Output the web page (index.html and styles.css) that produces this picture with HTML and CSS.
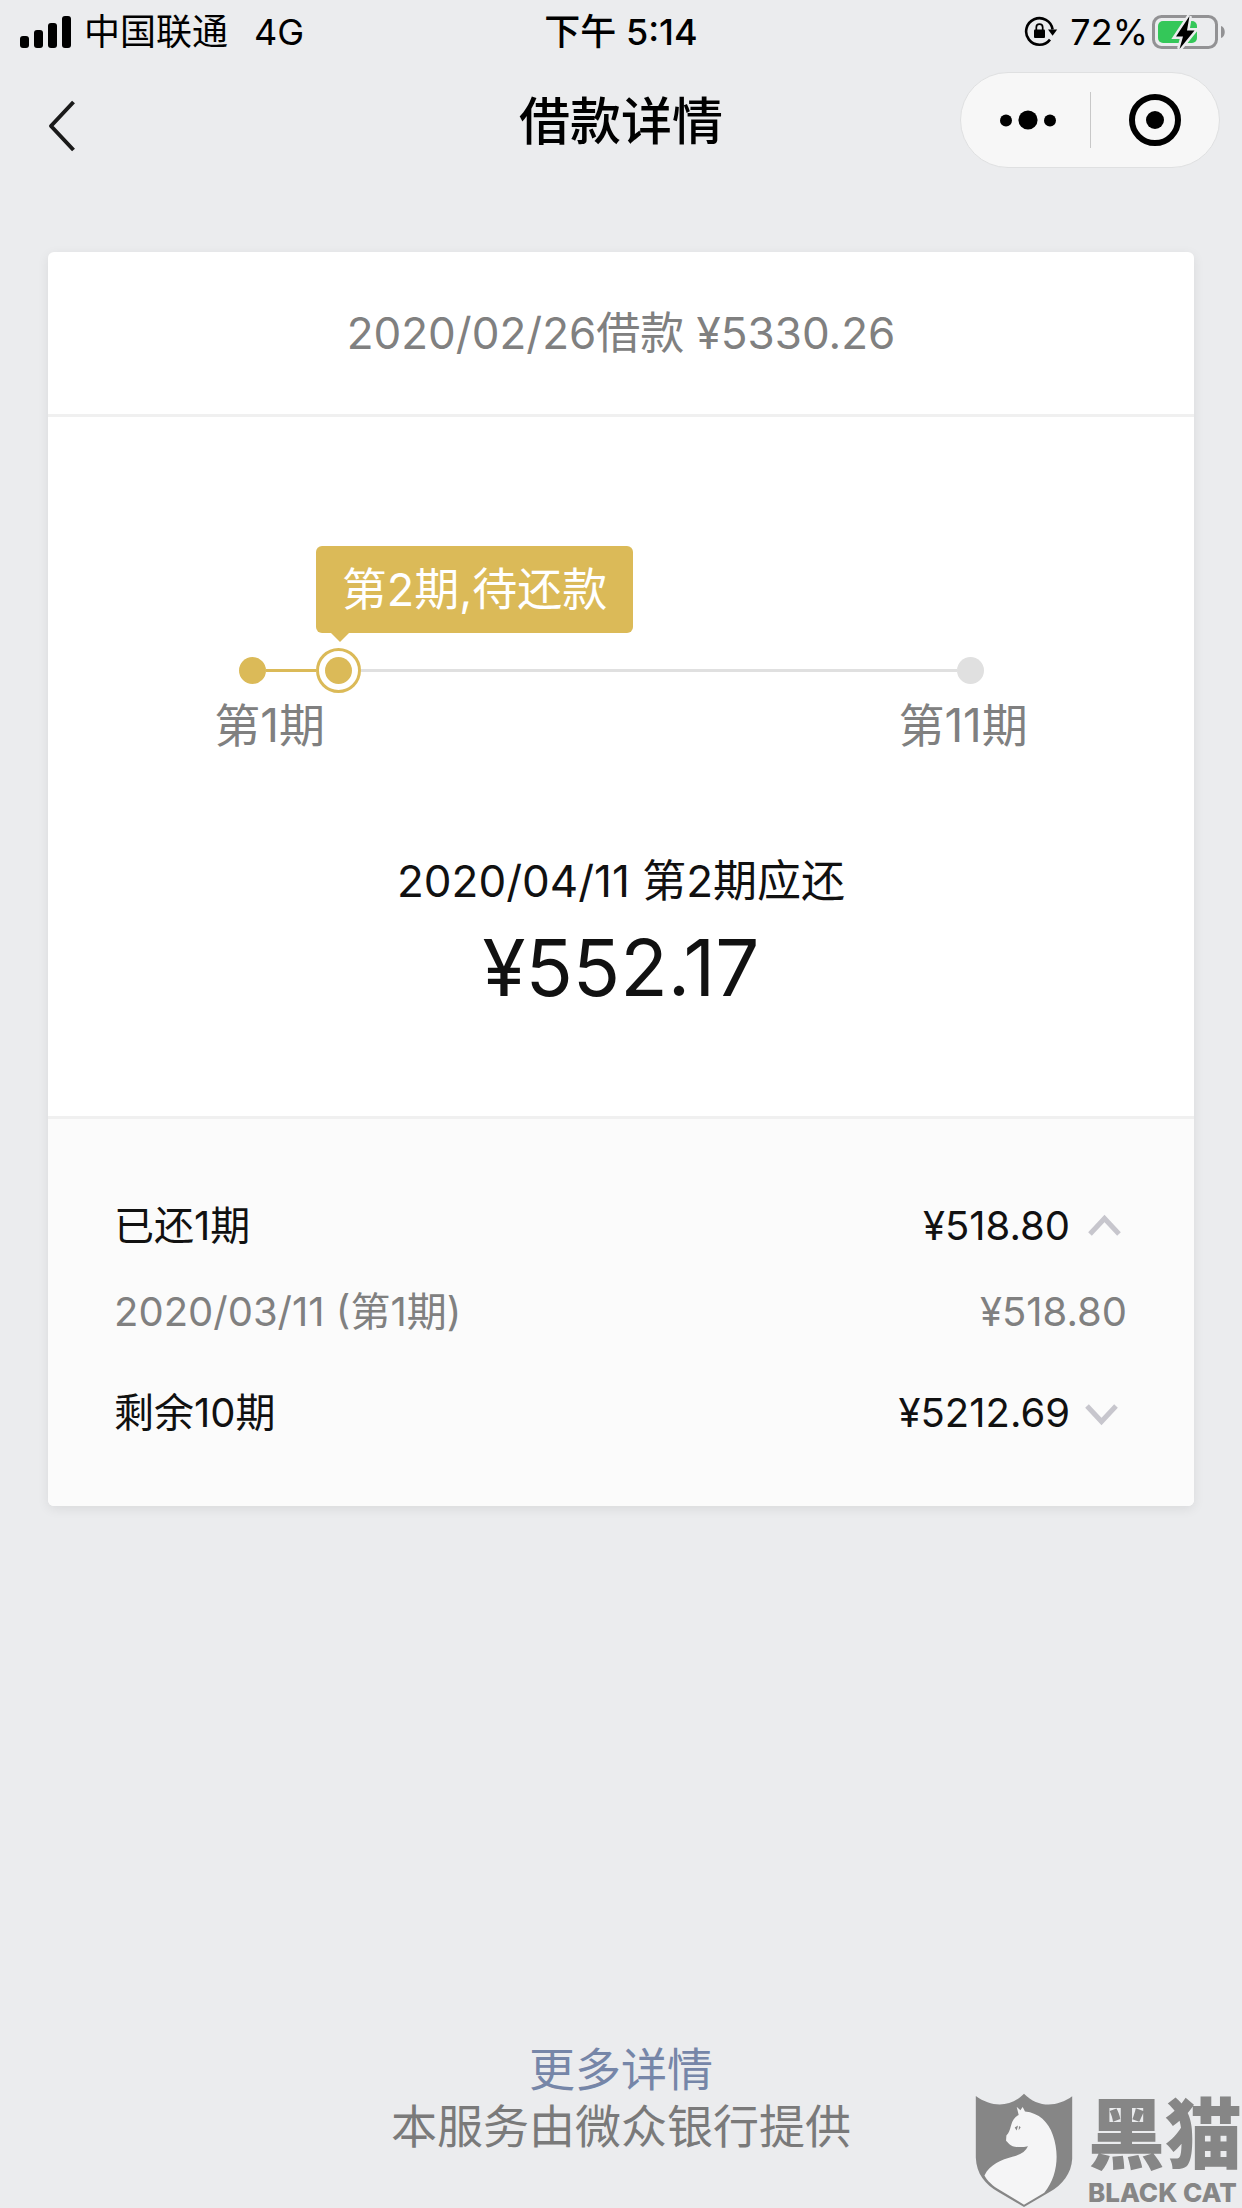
FILE: index.html
```html
<!DOCTYPE html>
<html lang="zh-CN">
<head>
<meta charset="utf-8">
<meta name="viewport" content="width=device-width, initial-scale=1">
<title>借款详情</title>
<link rel="stylesheet" href="styles.css">
</head>
<body>
<div class="page">
  <div class="status-bar">
    <div class="status-left">
      <svg class="signal" viewBox="0 0 51 32" aria-hidden="true">
        <rect x="0" y="20" width="9" height="12" rx="3"/>
        <rect x="14" y="14" width="9" height="18" rx="3"/>
        <rect x="28" y="7" width="9" height="25" rx="3"/>
        <rect x="42" y="0" width="9" height="32" rx="3"/>
      </svg>
      <span class="carrier">中国联通</span>
      <span>4G</span>
    </div>
    <div class="status-time">下午 5:14</div>
    <div class="status-right">
      <svg class="rotation-lock" viewBox="0 0 34 31" aria-hidden="true">
        <path d="M26 23.6A13.3 13.3 0 1 1 28.6 13.5" fill="none" stroke="#000" stroke-width="2.6"/>
        <path d="M24 13.5h9.2l-4.6 6.2z"/>
        <rect x="10" y="13.5" width="11" height="8.5" rx="1"/>
        <path d="M12.3 14v-2.6a3.2 3.2 0 0 1 6.4 0V14" fill="none" stroke="#000" stroke-width="1.7"/>
      </svg>
      <span>72%</span>
      <svg class="battery" viewBox="0 0 74 36" aria-hidden="true">
        <rect x="1.5" y="2.5" width="63" height="31" rx="8" fill="none" stroke="#929294" stroke-width="3"/>
        <path d="M69 12c5 1 5 11 0 12z" fill="#929294"/>
        <rect x="6" y="7" width="39" height="22" rx="5" fill="#34c759"/>
        <path d="M37.500 2L24 22.500h7L27.500 35 42.500 16.500H35z" stroke="#ebecee" stroke-width="5"/>
        <path d="M37.500 2L24 22.500h7L27.500 35 42.500 16.500H35z"/>
      </svg>
    </div>
  </div>

  <header class="nav-bar">
    <button class="back" type="button" aria-label="返回">
      <svg viewBox="0 0 28 52" aria-hidden="true"><path d="M25.500 2L3 26l22.500 24" fill="none" stroke="#1a1a1a" stroke-width="4" stroke-linejoin="round"/></svg>
    </button>
    <h1 class="title">借款详情</h1>
    <div class="capsule">
      <button class="capsule-button" type="button" aria-label="更多">
        <svg viewBox="0 0 64 54" aria-hidden="true"><circle cx="12" cy="27.500" r="6"/><circle cx="34" cy="27" r="9.600"/><circle cx="56" cy="27.500" r="6"/></svg>
      </button>
      <button class="capsule-button" type="button" aria-label="关闭">
        <svg viewBox="0 0 64 54" aria-hidden="true"><circle cx="32" cy="27" r="23" fill="none" stroke="#000" stroke-width="6"/><circle cx="32" cy="27" r="9"/></svg>
      </button>
    </div>
  </header>

  <main class="card">
    <h2 class="loan">2020/02/26借款 ¥5330.26</h2>

    <section class="current">
      <div class="timeline">
        <div class="track">
          <span class="dot"></span>
          <span class="line line-paid"></span>
          <span class="dot-current"><span class="tooltip">第2期,待还款</span></span>
          <span class="line line-left"></span>
          <span class="dot dot-left"></span>
        </div>
        <div class="track-labels"><span>第1期</span><span>第11期</span></div>
      </div>
      <p class="due">2020/04/11 第2期应还</p>
      <p class="amount">¥552.17</p>
    </section>

    <section class="history">
      <button class="row" type="button" aria-expanded="true">
        <span>已还1期</span>
        <span class="row-value">¥518.80
          <svg class="chevron" viewBox="0 0 36 36" aria-hidden="true"><path d="M5 26L19.500 10.500 34 26"/></svg>
        </span>
      </button>
      <div class="row row-detail"><span>2020/03/11 (第1期)</span><span>¥518.80</span></div>
      <button class="row" type="button" aria-expanded="false">
        <span>剩余10期</span>
        <span class="row-value">¥5212.69
          <svg class="chevron" viewBox="0 0 36 36" aria-hidden="true"><path d="M2 11l14.500 15.500L31 11"/></svg>
        </span>
      </button>
    </section>
  </main>

  <footer class="footer">
    <a class="more" href="#">更多详情</a>
    <p class="provider">本服务由微众银行提供</p>
  </footer>

  <div class="watermark">
    <svg class="shield" viewBox="38 38 294 346" aria-hidden="true">
      <path d="M40 47C88 82 145 82 185 40C226 82 283 82 330 48V236C328 280 300 315 262 336L185 381L108 336C68 312 42 282 40 232Z" fill="#868686"/>
      <path d="M163 79L174 90L181 80L188 94C230 98 258 125 272 165C292 222 286 290 246 338L185 374L112 330C92 318 74 302 66 286C82 254 118 238 150 230C174 224 190 214 197 198C180 202 160 201 151 198C143 196 137 188 131 182L132 166C140 158 142 150 146 136C150 120 158 109 169 104Z" fill="#f5f5f6"/>
      <path d="M157 142L167 136L163 151ZM170 137L175 141L169 150Z" fill="#868686"/>
    </svg>
    <div class="brand">
      <span class="brand-cn">黑猫</span>
      <span class="brand-en">BLACK CAT</span>
    </div>
  </div>
</div>
</body>
</html>
```
FILE: styles.css
```css
* {
  box-sizing: border-box;
}

body {
  margin: 0;
  background: #ebecee;
  color: #111;
  font-family: Inter, "Noto Sans CJK SC", sans-serif;
  font-size: 44px;
  line-height: 60px;
}

h1,
h2,
p {
  margin: 0;
  font-weight: 400;
}

button {
  margin: 0;
  padding: 0;
  border: 0;
  background: none;
  color: inherit;
  font: inherit;
  cursor: pointer;
}

.page {
  position: relative;
  display: flex;
  flex-direction: column;
  min-height: 100vh;
}

/* Status bar */
.status-bar {
  display: grid;
  grid-template-columns: 1fr auto 1fr;
  align-items: center;
  height: 63px;
  padding: 0 16px;
  color: #000;
  font-size: 36px;
}

.status-left,
.status-right {
  display: flex;
  align-items: center;
}

.status-right {
  justify-content: flex-end;
}

.signal {
  width: 51px;
  height: 32px;
  margin: 0 13px 0 4px;
}

.carrier {
  margin-right: 26px;
}

.status-time {
  font-weight: 500;
}

.rotation-lock {
  width: 34px;
  height: 31px;
  margin-right: 12px;
}

.battery {
  width: 74px;
  height: 36px;
  margin-left: 4px;
}

/* Navigation */
.nav-bar {
  display: grid;
  grid-template-columns: 1fr auto 1fr;
  align-items: center;
  height: 114px;
  padding: 0 22px;
}

.back {
  justify-self: start;
  padding: 12px 0 0 26px;
}

.back svg {
  display: block;
  width: 28px;
  height: 52px;
}

.title {
  padding-top: 4px;
  color: #000;
  font-size: 51px;
  font-weight: 500;
}

.capsule {
  display: flex;
  align-items: center;
  justify-self: end;
  height: 96px;
  border: 1px solid #dfe0e1;
  border-radius: 48px;
  background: #f7f7f7;
}

.capsule-button {
  width: 129px;
  height: 56px;
}

.capsule-button + .capsule-button {
  border-left: 1px solid #c8c8c8;
}

.capsule-button svg {
  display: block;
  width: 64px;
  height: 54px;
  margin: 0 auto;
}

/* Loan card */
.card {
  margin: 75px 48px 0;
  border-radius: 6px;
  background: #fff;
  box-shadow: 0 3px 12px rgba(0, 0, 0, 0.08);
}

.loan {
  padding: 51px 0;
  border-bottom: 3px solid #f0f0f0;
  color: #808080;
  font-size: 44px;
  text-align: center;
}

.current {
  padding: 231px 0 103px;
  border-bottom: 3px solid #f0f0f0;
  text-align: center;
}

.timeline {
  width: 71%;
  margin: 0 auto 96px;
  font-size: 46px;
}

.track {
  display: flex;
  align-items: center;
  height: 45px;
  margin: 0 44px 2px 25px;
}

.dot {
  flex: none;
  width: 27px;
  height: 27px;
  border-radius: 50%;
  background: #dbba58;
}

.dot-left {
  background: #e0e0e0;
}

.line {
  height: 3px;
}

.line-paid {
  flex: 1;
  background: #dbba58;
}

.line-left {
  flex: 12;
  background: #e0e0e0;
}

.dot-current {
  position: relative;
  flex: none;
  width: 45px;
  height: 45px;
  padding: 6px;
  border: 3px solid #dbba58;
  border-radius: 50%;
  background: #fff;
}

.dot-current::before {
  content: "";
  display: block;
  height: 27px;
  border-radius: 50%;
  background: #dbba58;
}

.tooltip {
  position: absolute;
  bottom: 57px;
  left: -3px;
  padding: 14px 26px 13px;
  border-radius: 6px;
  background: #dbba58;
  color: #fff;
  font-size: 45px;
  white-space: nowrap;
}

.tooltip::after {
  content: "";
  position: absolute;
  top: 100%;
  left: 15px;
  border: 9px solid transparent;
  border-top-color: #dbba58;
  border-bottom: 0;
}

.track-labels {
  display: flex;
  justify-content: space-between;
  color: #808080;
}

.amount {
  margin-top: 12px;
  font-size: 78px;
  line-height: 90px;
}

/* Repayment history */
.history {
  padding: 77px 67px 63px 66px;
  border-radius: 0 0 6px 6px;
  background: #fbfbfb;
  font-size: 40px;
}

.row {
  display: flex;
  justify-content: space-between;
  width: 100%;
}

.row-detail {
  margin: 26px 0 41px;
  color: #808080;
}

.row-value {
  display: flex;
  align-items: center;
  gap: 15px;
  padding-right: 6px;
}

.chevron {
  width: 36px;
  height: 36px;
  fill: none;
  stroke: #c7c6cd;
  stroke-width: 5;
}

/* Footer */
.footer {
  display: flex;
  flex-direction: column;
  align-items: center;
  margin-top: auto;
  padding-bottom: 53px;
  font-size: 46px;
  line-height: 57px;
}

.more {
  color: #7686a8;
  text-decoration: none;
}

.provider {
  color: #7a7a7a;
}

/* Watermark, laid over the page corner */
.watermark {
  position: absolute;
  right: 0;
  bottom: 0;
  display: flex;
  gap: 15px;
  color: #868686;
}

.shield {
  width: 98px;
  height: 115px;
}

.brand {
  display: flex;
  flex-direction: column;
}

.brand-cn {
  font-size: 77px;
  font-weight: 900;
  line-height: 85px;
}

.brand-en {
  font-size: 26px;
  font-weight: 800;
  line-height: 30px;
}
```
